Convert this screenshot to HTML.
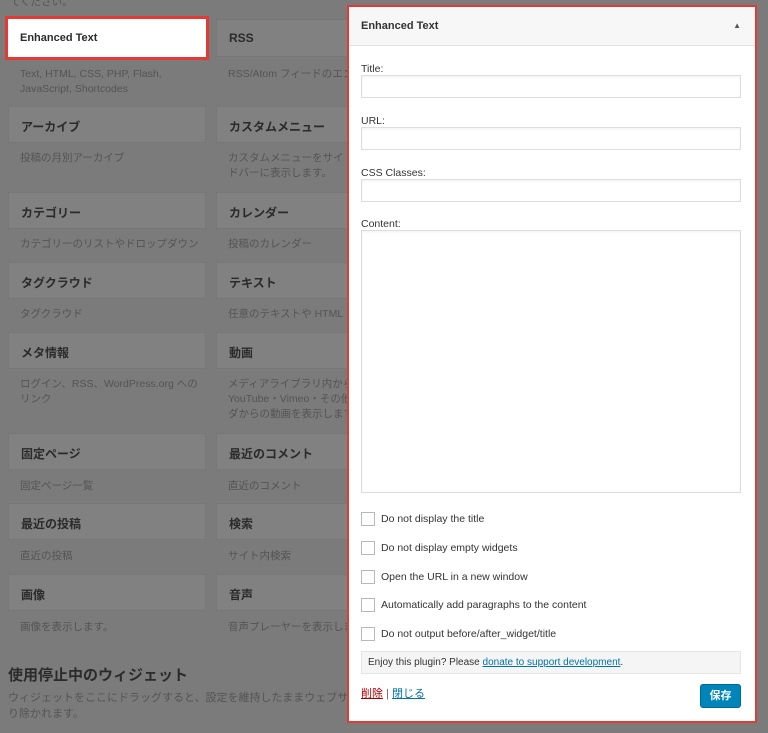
<!DOCTYPE html>
<html><head><meta charset="utf-8"><style>
*{box-sizing:border-box;margin:0;padding:0}
body{width:768px;height:733px;background:#7b7b7b;font-family:"Liberation Sans","Noto Sans CJK JP",sans-serif;position:relative;overflow:hidden;font-size:11px}
.t{position:absolute;width:198px;height:37px;background:#818181;border:1px solid #777;font-weight:bold;font-size:12px;color:#2b2b2b;padding:11px 0 0 12px}
.d{position:absolute;color:#545454;font-size:10.5px;line-height:15px;width:190px}
.p{position:absolute;left:347px;top:5px;width:410px;height:718px;border:2px solid #e53935;background:#fff}
.hd{height:39px;background:#f7f7f7;border-bottom:1px solid #e2e2e2;font-weight:bold;font-size:11px;color:#333;padding:13px 0 0 12px;position:relative}
.lb{position:absolute;left:12px;color:#333;font-size:10.5px}
.in{position:absolute;left:12px;width:380px;border:1px solid #ddd;box-shadow:inset 0 1px 2px rgba(0,0,0,.06)}
.cb{position:absolute;left:12px;width:14px;height:14px;border:1px solid #b4b9be}
.cl{position:absolute;left:32px;color:#333;font-size:10.5px}
</style></head><body>
<div style="position:absolute;left:10px;top:-6px;color:#545454;font-size:10.5px">てください。</div>
<div class="t" style="left:8px;top:19px;background:#fff;border:none;box-shadow:0 0 0 3px #e53935;font-size:11px;padding-top:13px;height:38px">Enhanced Text</div>
<div class="t" style="left:216px;top:19px;height:38px">RSS</div>
<div class="d" style="left:20px;top:67px">Text, HTML, CSS, PHP, Flash,<br>JavaScript, Shortcodes</div>
<div class="d" style="left:228px;top:67px;width:130px;white-space:nowrap;overflow:hidden">RSS/Atom フィードのエントリー</div>

<div class="t" style="left:8px;top:106px">アーカイブ</div>
<div class="t" style="left:216px;top:106px">カスタムメニュー</div>
<div class="d" style="left:20px;top:151px">投稿の月別アーカイブ</div>
<div class="d" style="left:228px;top:151px;width:120px">カスタムメニューをサイドバーに表示します。</div>

<div class="t" style="left:8px;top:192px">カテゴリー</div>
<div class="t" style="left:216px;top:192px">カレンダー</div>
<div class="d" style="left:20px;top:237px">カテゴリーのリストやドロップダウン</div>
<div class="d" style="left:228px;top:237px">投稿のカレンダー</div>

<div class="t" style="left:8px;top:262px">タグクラウド</div>
<div class="t" style="left:216px;top:262px">テキスト</div>
<div class="d" style="left:20px;top:307px">タグクラウド</div>
<div class="d" style="left:228px;top:307px">任意のテキストや HTML</div>

<div class="t" style="left:8px;top:332px">メタ情報</div>
<div class="t" style="left:216px;top:332px">動画</div>
<div class="d" style="left:20px;top:377px">ログイン、RSS、WordPress.org への<br>リンク</div>
<div class="d" style="left:228px;top:377px;width:120px;white-space:nowrap;overflow:hidden">メディアライブラリ内からの<br>YouTube・Vimeo・その他の<br>ダからの動画を表示します。</div>

<div class="t" style="left:8px;top:433px">固定ページ</div>
<div class="t" style="left:216px;top:433px">最近のコメント</div>
<div class="d" style="left:20px;top:479px">固定ページ一覧</div>
<div class="d" style="left:228px;top:479px">直近のコメント</div>

<div class="t" style="left:8px;top:503px">最近の投稿</div>
<div class="t" style="left:216px;top:503px">検索</div>
<div class="d" style="left:20px;top:549px">直近の投稿</div>
<div class="d" style="left:228px;top:549px">サイト内検索</div>

<div class="t" style="left:8px;top:574px">画像</div>
<div class="t" style="left:216px;top:574px">音声</div>
<div class="d" style="left:20px;top:620px">画像を表示します。</div>
<div class="d" style="left:228px;top:620px;width:120px;white-space:nowrap;overflow:hidden">音声プレーヤーを表示します。</div>

<div style="position:absolute;left:8px;top:664px;font-size:15px;font-weight:bold;color:#2b2b2b">使用停止中のウィジェット</div>
<div style="position:absolute;left:8px;top:690px;font-size:11px;line-height:16px;color:#545454;width:340px;white-space:nowrap;overflow:hidden">ウィジェットをここにドラッグすると、設定を維持したままウェブサイトから取<br>り除かれます。</div>

<div class="p">
<div class="hd">Enhanced Text<span style="position:absolute;right:14px;top:14px;font-size:8px;color:#555">▲</span></div>
<div class="lb" style="top:56px">Title:</div>
<div class="in" style="top:68px;height:23px"></div>
<div class="lb" style="top:108px">URL:</div>
<div class="in" style="top:120px;height:23px"></div>
<div class="lb" style="top:160px">CSS Classes:</div>
<div class="in" style="top:172px;height:23px"></div>
<div class="lb" style="top:211px">Content:</div>
<div class="in" style="top:223px;height:263px"></div>
<div class="cb" style="top:505px"></div><div class="cl" style="top:506px">Do not display the title</div>
<div class="cb" style="top:534px"></div><div class="cl" style="top:535px">Do not display empty widgets</div>
<div class="cb" style="top:563px"></div><div class="cl" style="top:564px">Open the URL in a new window</div>
<div class="cb" style="top:591px"></div><div class="cl" style="top:592px">Automatically add paragraphs to the content</div>
<div class="cb" style="top:620px"></div><div class="cl" style="top:621px">Do not output before/after_widget/title</div>
<div style="position:absolute;left:12px;top:644px;width:380px;height:23px;background:#f5f5f5;border:1px solid #e5e5e5;font-size:10px;color:#333;padding:5px 0 0 6px">Enjoy this plugin? Please <span style="color:#0073aa;text-decoration:underline">donate to support development</span>.</div>
<div style="position:absolute;left:12px;top:678px;font-size:11px;color:#0073aa"><span style="color:#a00;text-decoration:underline">削除</span> <span style="color:#666">|</span> <span style="text-decoration:underline">閉じる</span></div>
<div style="position:absolute;left:351px;top:677px;width:41px;height:24px;background:#0085ba;border:1px solid #006799;border-radius:3px;color:#fff;font-size:11px;font-weight:bold;text-align:center;line-height:22px">保存</div>
</div>
</body></html>
